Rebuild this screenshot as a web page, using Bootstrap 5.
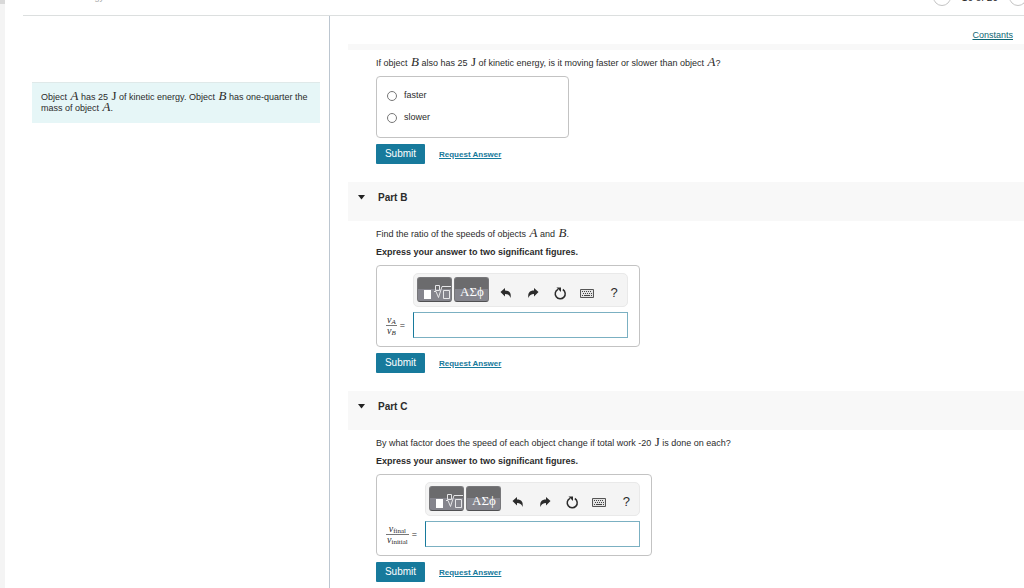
<!DOCTYPE html>
<html lang="en">
<head>
<meta charset="utf-8">
<meta name="viewport" content="width=device-width, initial-scale=1">
<title>Kinetic energy problem</title>
<link href="https://cdn.jsdelivr.net/npm/bootstrap@5.3.0/dist/css/bootstrap.min.css" rel="stylesheet">
<style>
body{font-family:"Liberation Sans",Arial,sans-serif;font-size:9px;line-height:11px;color:#2b2b2b;background:#fff}
.edge{width:5px;background:#f4f4f4;border-top:4px solid #d9d9d9}
.topbar{height:16px;margin-left:18px;border-bottom:1px solid #dcdfdf;overflow:hidden}
.topbar>*{margin-top:-12px}
.pager-set{gap:11px;margin-right:-3px}
.pager{width:18px;height:18px;border:1px solid #c4c4c4;border-radius:50%;background:#fff;padding:0}
.count{font-size:10px;line-height:20px;color:#222}
.crumb{color:#aaa;line-height:18px;text-decoration:none}
.side{width:325px;border-right:1px solid #bcc6d0;padding:66px 9px 0 27px}
.intro{background:#e6f6f7;border-top:1px solid #dfe9e9;padding:9px}
.mi,.mr{font-family:"Liberation Serif",serif;font-size:13px;line-height:7px;margin-left:1px}
.mi{font-style:italic}
.work{padding-left:18px}
.constants{color:#0f6674;padding:14px 11px 3px}
.strip{height:6px;background:#f8f8f8}
.parthead{height:39px;background:#f8f8f8;margin-top:18px;padding:0 0 8px 10px}
.parthead h2{font-size:10px;line-height:12px;font-weight:700;margin:0 0 0 13px}
.question{padding:8px 0 0 28px}
.question p{margin-bottom:7px}
.frame{border:1px solid #c3c3c3;border-radius:4px;width:fit-content}
.choices{width:193px;padding:13px 10px 14px;gap:11px}
.choices label{gap:7px}
.choices input{appearance:none;width:10px;height:10px;border:1px solid #777;border-radius:50%;margin:0;background:#fff}
.acts{margin-top:6px;gap:14px}
.go{background:#177a9c;color:#fff;border:0;border-radius:1px;width:49px;height:20px;font-size:10px;line-height:18px;padding:0}
.req{color:#177a9c;font-weight:700;font-size:8px}
.answer{padding:7px 11px 8px 9px}
.tools{width:215px;height:34px;background:#f4f4f4;border:1px solid #e9e9e9;border-radius:5px;padding:3px 0 0 3px;margin-bottom:5px}
.tools button{border:0;background:none;padding:0;color:#2b2b2b;line-height:0;flex:none}
.tools .tile{width:35px;height:25px;border-radius:3px;background:linear-gradient(#6b6b6d 0 46%,#85858d 50%);border:1px solid #77777a;border-bottom-color:#505052;margin-right:2px;overflow:hidden}
.tile text{font-family:"Liberation Serif",serif;font-size:13px;fill:#fff}
.tools .plain{width:27px;height:30px;padding-top:2px}
.tools .tile+.plain{margin-left:2px}
.tools .help{font-size:13px}
.entry{width:215px;height:26px;border:1px solid #7bb0c2;border-left-color:#177a9c;display:block;padding:0 4px}
.row-line{gap:3px}
.quotient{font-family:"Liberation Serif",serif;font-style:italic;font-size:10px;line-height:10px;text-align:center}
.quotient div{padding:0 1px}
.quotient sub{font-size:7px;line-height:7px;bottom:-1px}
.quotient .top-part{border-bottom:1px solid #777}
.quotient .up{font-style:normal}
.equals{width:6px}
</style>
</head>
<body>
<svg width="0" height="0" class="position-absolute" aria-hidden="true">
<symbol id="tpl" viewBox="0 0 33 23"><path d="M6 12h7v9H6z" fill="#fff"/><path d="M16 13.500h2l2.500 6L24 8.500h9M17.500 7.500h4v5h-4zM25.500 12.500h6v8h-6z" fill="none" stroke="#e6e6e8"/></symbol>
<symbol id="undo" viewBox="0 0 12 12"><path d="M5 1v2.500c4.500 0 6.500 2.500 5.500 7.500C9.500 8 8 7 5 7v2.500L.5 5z" fill="#2b2b2b"/></symbol>
<symbol id="redo" viewBox="0 0 12 12"><path d="M7 1v2.500C2.500 3.500.5 6 1.500 11 2.500 8 4 7 7 7v2.500L11.500 5z" fill="#2b2b2b"/></symbol>
<symbol id="reset" viewBox="0 0 14 14"><path d="M9.800 3.500A5 5 0 1 1 5 3.300" fill="none" stroke="#2b2b2b" stroke-width="1.500"/><path d="M3.500 1.500H8V6z" fill="#2b2b2b"/></symbol>
<symbol id="keys" viewBox="0 0 14 9"><path d="M.5.5h13v8H.5z" fill="#e4e4e4" stroke="#555"/><path d="M2 2.500h10M3 4.500h9" stroke="#444" stroke-dasharray="1 1"/><path d="M2 6.500h1m1 0h6m1 0h1" stroke="#444"/></symbol>
</svg>
<div class="d-flex min-vh-100">
<div class="edge flex-shrink-0"></div>
<div class="flex-grow-1 d-flex flex-column">
<header class="topbar d-flex justify-content-between align-items-start">
<a href="#" class="crumb ps-4">Kinetic energy</a>
<div class="d-flex align-items-start pager-set"><button class="pager" aria-label="Previous"></button><span class="count">16 of 20</span><button class="pager" aria-label="Next"></button></div>
</header>
<div class="d-flex flex-grow-1">
<aside class="side flex-shrink-0"><p class="intro mb-0">Object <span class="mi">A</span> has 25 <span class="mr">J</span> of kinetic energy. Object <span class="mi">B</span> has one-quarter the mass of object <span class="mi">A</span>.</p></aside>
<main class="work flex-grow-1">
<div class="text-end constants"><a href="#" class="text-reset">Constants</a></div>
<div class="strip"></div>
<section class="question">
<p>If object <span class="mi">B</span> also has 25 <span class="mr">J</span> of kinetic energy, is it moving faster or slower than object <span class="mi">A</span>?</p>
<div class="frame choices d-grid"><label class="d-flex align-items-center"><input type="radio" name="speed">faster</label><label class="d-flex align-items-center"><input type="radio" name="speed">slower</label></div>
<div class="d-flex align-items-center acts"><button class="go">Submit</button><a href="#" class="req">Request Answer</a></div>
</section>

<div class="parthead d-flex align-items-center"><svg width="7" height="5" viewBox="0 0 7 5"><path d="M0 0h7L3.500 4.500z" fill="#222"/></svg><h2>Part B</h2></div>
<section class="question">
<p>Find the ratio of the speeds of objects <span class="mi">A</span> and <span class="mi">B</span>.</p>
<p><b>Express your answer to two significant figures.</b></p>
<div class="frame answer d-flex flex-column align-items-end">
<div class="tools d-flex">
<button class="tile" aria-label="Templates"><svg width="33" height="23"><use href="#tpl"/></svg></button>
<button class="tile" aria-label="Symbols"><svg width="33" height="23"><text x="5" y="18">ΑΣϕ</text></svg></button>
<button class="plain" aria-label="Undo"><svg width="12" height="12"><use href="#undo"/></svg></button>
<button class="plain" aria-label="Redo"><svg width="12" height="12"><use href="#redo"/></svg></button>
<button class="plain" aria-label="Reset"><svg width="14" height="14"><use href="#reset"/></svg></button>
<button class="plain" aria-label="Keyboard"><svg width="14" height="9"><use href="#keys"/></svg></button>
<button class="plain help">?</button>
</div>
<div class="d-flex align-items-center row-line"><label class="quotient" for="speedRatio"><div class="top-part">v<sub>A</sub></div><div>v<sub>B</sub></div></label><span class="equals">=</span><input class="entry ms-1" id="speedRatio" type="text"></div>
</div>
<div class="d-flex align-items-center acts"><button class="go">Submit</button><a href="#" class="req">Request Answer</a></div>
</section>

<div class="parthead d-flex align-items-center"><svg width="7" height="5" viewBox="0 0 7 5"><path d="M0 0h7L3.500 4.500z" fill="#222"/></svg><h2>Part C</h2></div>
<section class="question">
<p>By what factor does the speed of each object change if total work -20 <span class="mr">J</span> is done on each?</p>
<p><b>Express your answer to two significant figures.</b></p>
<div class="frame answer d-flex flex-column align-items-end">
<div class="tools d-flex">
<button class="tile" aria-label="Templates"><svg width="33" height="23"><use href="#tpl"/></svg></button>
<button class="tile" aria-label="Symbols"><svg width="33" height="23"><text x="5" y="18">ΑΣϕ</text></svg></button>
<button class="plain" aria-label="Undo"><svg width="12" height="12"><use href="#undo"/></svg></button>
<button class="plain" aria-label="Redo"><svg width="12" height="12"><use href="#redo"/></svg></button>
<button class="plain" aria-label="Reset"><svg width="14" height="14"><use href="#reset"/></svg></button>
<button class="plain" aria-label="Keyboard"><svg width="14" height="9"><use href="#keys"/></svg></button>
<button class="plain help">?</button>
</div>
<div class="d-flex align-items-center row-line"><label class="quotient" for="speedFactor"><div class="top-part">v<sub class="up">final</sub></div><div>v<sub class="up">initial</sub></div></label><span class="equals">=</span><input class="entry ms-1" id="speedFactor" type="text"></div>
</div>
<div class="d-flex align-items-center acts"><button class="go">Submit</button><a href="#" class="req">Request Answer</a></div>
</section>
</main></div></div></div>
</body>
</html>
